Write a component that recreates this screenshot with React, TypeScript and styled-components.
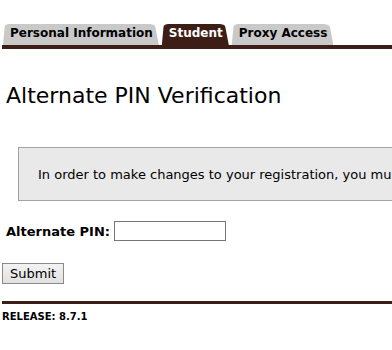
import React from 'react';
import styled, { createGlobalStyle } from 'styled-components';

const GlobalStyle = createGlobalStyle`
	html, body {
		margin: 0;
		padding: 0;
		background: #ffffff;
		overflow: hidden;
	}
	body {
		font-family: Verdana, "DejaVu Sans", sans-serif;
		color: #000000;
	}
`;

const Page = styled.div`
	width: 392px;
	padding-top: 24px;
`;

const TabBar = styled.nav`
	display: flex;
	align-items: flex-end;
	gap: 3px;
	padding-left: 3px;
	height: 21px;
`;

const Tab = styled.a<{ active?: boolean }>`
	display: flex;
	align-items: center;
	height: 21px;
	padding: 0 6px 4px 7px;
	box-sizing: border-box;
	font-size: 12px;
	font-weight: bold;
	text-decoration: none;
	color: ${props => (props.active ? '#ffffff' : '#000000')};
	background: ${props => (props.active ? '#3d1e17' : '#c9c9c9')};
	border-radius: 6px 9px 0 0;
	clip-path: polygon(2px 0, calc(100% - 4px) 0, 100% 100%, 0 100%);
`;

const TabRule = styled.div`
	height: 4px;
	margin-left: 2px;
	background: #3d1e17;
`;

const Heading = styled.h2`
	margin: 34px 0 0 6px;
	font-size: 22px;
	font-weight: normal;
	line-height: 26px;
`;

const InfoBox = styled.div`
	margin: 38px 0 0 18px;
	height: 54px;
	box-sizing: border-box;
	display: flex;
	align-items: center;
	padding-left: 19px;
	background: #e9e9e9;
	border: 1px solid #a3a3a3;
	border-right: none;
	white-space: nowrap;
	overflow: hidden;
	font-size: 13px;
`;

const FieldRow = styled.div`
	display: flex;
	align-items: center;
	gap: 4px;
	margin: 20px 0 0 6px;
`;

const FieldLabel = styled.label`
	font-size: 13px;
	font-weight: bold;
`;

const PinInput = styled.input`
	width: 112px;
	height: 20px;
	box-sizing: border-box;
	border: 1px solid #767676;
	padding: 0 2px;
	margin: 0;
`;

const SubmitButton = styled.button`
	display: block;
	margin: 22px 0 0 2px;
	height: 21px;
	padding: 0 7px;
	font-family: Verdana, "DejaVu Sans", sans-serif;
	font-size: 13px;
	color: #000000;
	background: linear-gradient(#f3f3f3, #e1e1e1);
	border: 1px solid #8a8a8a;
	border-radius: 0;
`;

const FooterRule = styled.div`
	height: 3px;
	margin: 17px 0 0 2px;
	background: #3d1e17;
`;

const Release = styled.div`
	margin: 7px 0 0 2px;
	font-size: 10px;
	font-weight: bold;
`;

export default function App() {
	return (
		<Page>
			<GlobalStyle />
			<TabBar>
				<Tab href="#">Personal Information</Tab>
				<Tab href="#" active>Student</Tab>
				<Tab href="#">Proxy Access</Tab>
			</TabBar>
			<TabRule />
			<Heading>Alternate PIN Verification</Heading>
			<InfoBox>In order to make changes to your registration, you must first enter your Alternate PIN.</InfoBox>
			<FieldRow>
				<FieldLabel htmlFor="pin">Alternate PIN:</FieldLabel>
				<PinInput id="pin" type="password" />
			</FieldRow>
			<SubmitButton type="submit">Submit</SubmitButton>
			<FooterRule />
			<Release>RELEASE: 8.7.1</Release>
		</Page>
	);
}
